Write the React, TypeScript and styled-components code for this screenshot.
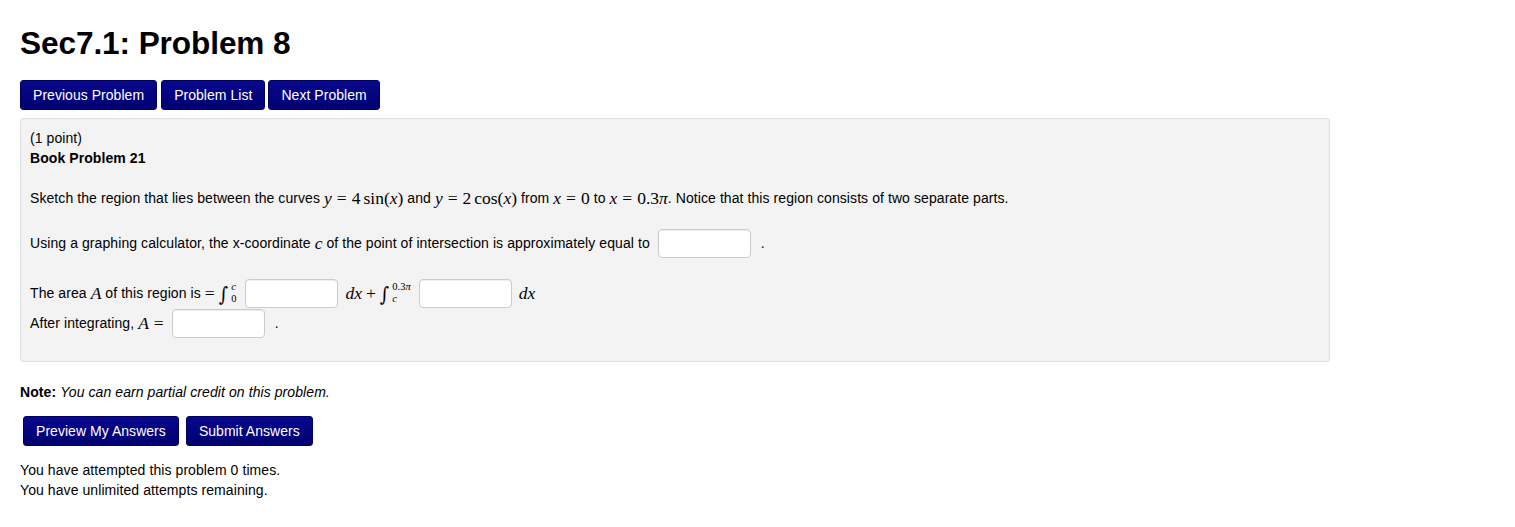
import React from 'react';
import styled, { createGlobalStyle } from 'styled-components';

const GlobalStyle = createGlobalStyle`
  html, body {
    margin: 0;
    padding: 0;
    background: #ffffff;
  }
  body {
    font-family: "Liberation Sans", Arial, Helvetica, sans-serif;
    font-size: 14px;
    line-height: 20px;
    letter-spacing: 0.08px;
    color: #000000;
  }
`;

const Page = styled.div`
  padding: 0 20px 20px 20px;
`;

const Title = styled.h1`
  margin: 0;
  padding-top: 24px;
  font-size: 31.6px;
  line-height: 38px;
  font-weight: 700;
  letter-spacing: -0.1px;
`;

const NavBar = styled.div`
  display: flex;
  gap: 3px;
  margin-top: 18px;
`;

const NavButton = styled.button<{ $gap?: number }>`
  font-family: "Liberation Sans", Arial, Helvetica, sans-serif;
  font-size: 14px;
  line-height: 20px;
  letter-spacing: 0.04px;
  height: 30px;
  padding: 4px 12px;
  margin-left: ${({ $gap }) => $gap ?? 0}px;
  color: #ffffff;
  background: linear-gradient(to bottom, #08088e, #000070);
  border: 1px solid #00005e;
  border-radius: 3px;
  cursor: pointer;
`;

const ProblemBox = styled.div`
  width: 1310px;
  box-sizing: border-box;
  margin-top: 8px;
  padding: 9px 9px 23px 9px;
  background: #f3f3f3;
  border: 1px solid #e0e0e0;
  border-radius: 3px;
`;

const Strong = styled.div`
  font-weight: 700;
`;

const Para = styled.div<{ $top?: number }>`
  display: flex;
  align-items: center;
  flex-wrap: wrap;
  white-space: pre;
  margin-top: ${({ $top }) => $top ?? 0}px;
  min-height: 20px;
`;

const InputRow = styled(Para)`
  height: 30px;
`;

const Math = styled.span`
  font-family: "Liberation Serif", "Times New Roman", serif;
  font-size: 17.5px;
  letter-spacing: 0;
  white-space: pre;
`;

const Var = styled.span`
  font-style: italic;
`;

const Op = styled.span<{ $left?: number; $right?: number }>`
  padding: 0 ${({ $right }) => $right ?? 5}px 0 ${({ $left }) => $left ?? 5}px;
`;

const Fn = styled.span`
  margin-left: 3px;
`;

const Integral = styled.span<{ $after?: number }>`
  display: inline-flex;
  align-items: center;
  margin-right: ${({ $after }) => $after ?? 0}px;
`;

const IntSign = styled.span`
  font-family: "DejaVu Serif", "Liberation Serif", serif;
  font-style: italic;
  font-size: 18px;
  line-height: 20px;
  transform: translateY(1px) scaleY(1.1);
`;

const Limits = styled.span`
  display: inline-flex;
  flex-direction: column;
  font-family: "Liberation Serif", "Times New Roman", serif;
  font-size: 10.5px;
  line-height: 12.5px;
  margin-left: 3px;
  letter-spacing: 0;
`;

const AnswerInput = styled.input<{ $left?: number; $right?: number }>`
  box-sizing: border-box;
  width: 93px;
  height: 29px;
  margin: 0 ${({ $right }) => $right ?? 4}px 0 ${({ $left }) => $left ?? 4}px;
  padding: 4px 6px;
  border: 1px solid #cccccc;
  border-radius: 4px;
  background: #ffffff;
  box-shadow: inset 0 1px 1px rgba(0, 0, 0, 0.075);
  font-size: 14px;
`;

const Note = styled.div`
  margin-top: 20px;
`;

const NoteText = styled.em`
  font-style: italic;
`;

const ActionBar = styled.div`
  display: flex;
  gap: 7px;
  margin-top: 14px;
  padding-left: 3px;
`;

const Attempts = styled.div`
  margin-top: 14px;
`;

const Lim: React.FC<{ sup: React.ReactNode; sub: React.ReactNode; after?: number }> = ({
  sup,
  sub,
  after,
}) => (
  <Integral $after={after}>
    <IntSign>∫</IntSign>
    <Limits>
      <span>{sup}</span>
      <span>{sub}</span>
    </Limits>
  </Integral>
);

const App: React.FC = () => {
  return (
    <Page>
      <GlobalStyle />
      <Title>Sec7.1: Problem 8</Title>

      <NavBar>
        <NavButton>Previous Problem</NavButton>
        <NavButton $gap={1}>Problem List</NavButton>
        <NavButton>Next Problem</NavButton>
      </NavBar>

      <ProblemBox>
        <div>(1 point)</div>
        <Strong>Book Problem 21</Strong>

        <Para $top={20}>
          {'Sketch the region that lies between the curves '}
          <Math>
            <Var>y</Var>
            <Op>=</Op>4<Fn>sin</Fn>(<Var>x</Var>)
          </Math>
          {' and '}
          <Math>
            <Var>y</Var>
            <Op>=</Op>2<Fn>cos</Fn>(<Var>x</Var>)
          </Math>
          {' from '}
          <Math>
            <Var>x</Var>
            <Op>=</Op>0
          </Math>
          {' to '}
          <Math>
            <Var>x</Var>
            <Op>=</Op>0.3<Var>π</Var>
          </Math>
          {'. Notice that this region consists of two separate parts.'}
        </Para>

        <InputRow $top={20}>
          {'Using a graphing calculator, the x-coordinate '}
          <Math>
            <Var>c</Var>
          </Math>
          {' of the point of intersection is approximately equal to '}
          <AnswerInput $right={6} />
          {' .'}
        </InputRow>

        <InputRow $top={20}>
          {'The area '}
          <Math>
            <Var>A</Var>
          </Math>
          {' of this region is '}
          <Math>
            <Op $left={0} $right={4}>=</Op>
          </Math>
          <Lim sup={<Var>c</Var>} sub="0" after={5} />
          <AnswerInput $left={4} $right={7} />
          <Math>
            <Var>dx</Var>
            <Op $left={4} $right={4}>+</Op>
          </Math>
          <Lim
            sup={
              <>
                0.3<Var>π</Var>
              </>
            }
            sub={<Var>c</Var>}
            after={4}
          />
          <AnswerInput $left={4} $right={7} />
          <Math>
            <Var>dx</Var>
          </Math>
        </InputRow>

        <InputRow>
          {'After integrating, '}
          <Math>
            <Var>A</Var>
            <Op $right={4}>=</Op>
          </Math>
          <AnswerInput $right={6} />
          {' .'}
        </InputRow>
      </ProblemBox>

      <Note>
        <b>Note:</b> <NoteText>You can earn partial credit on this problem.</NoteText>
      </Note>

      <ActionBar>
        <NavButton>Preview My Answers</NavButton>
        <NavButton>Submit Answers</NavButton>
      </ActionBar>

      <Attempts>
        <div>You have attempted this problem 0 times.</div>
        <div>You have unlimited attempts remaining.</div>
      </Attempts>
    </Page>
  );
};

export default App;
